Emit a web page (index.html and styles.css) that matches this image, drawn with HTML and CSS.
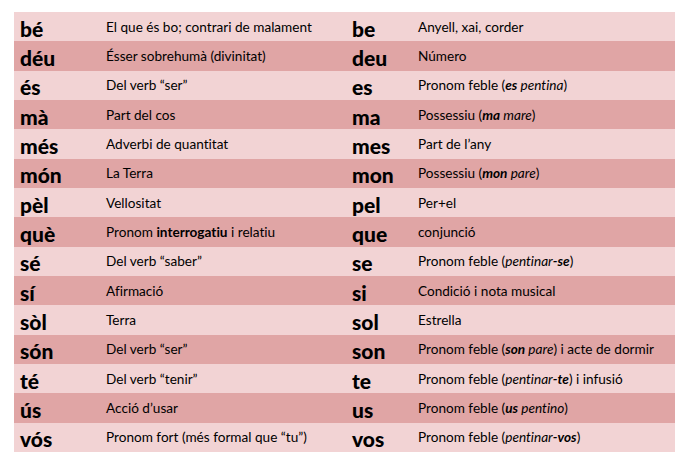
FILE: index.html
```html
<!DOCTYPE html>
<html lang="ca">
<head>
<meta charset="utf-8">
<link rel="stylesheet" href="styles.css">
</head>
<body>
<div class="table">
  <div class="row light"><div class="w">bé</div><div class="d">El que és bo; contrari de malament</div><div class="w">be</div><div class="d">Anyell, xai, corder</div></div>
  <div class="row dark"><div class="w">déu</div><div class="d">Ésser sobrehumà (divinitat)</div><div class="w">deu</div><div class="d">Número</div></div>
  <div class="row light"><div class="w">és</div><div class="d">Del verb “ser”</div><div class="w">es</div><div class="d">Pronom feble (<i><b>es</b> pentina</i>)</div></div>
  <div class="row dark"><div class="w">mà</div><div class="d">Part del cos</div><div class="w">ma</div><div class="d">Possessiu (<i><b>ma</b> mare</i>)</div></div>
  <div class="row light"><div class="w">més</div><div class="d">Adverbi de quantitat</div><div class="w">mes</div><div class="d">Part de l’any</div></div>
  <div class="row dark"><div class="w">món</div><div class="d">La Terra</div><div class="w">mon</div><div class="d">Possessiu (<i><b>mon</b> pare</i>)</div></div>
  <div class="row light"><div class="w">pèl</div><div class="d">Vellositat</div><div class="w">pel</div><div class="d">Per+el</div></div>
  <div class="row dark"><div class="w">què</div><div class="d">Pronom <b>interrogatiu</b> i relatiu</div><div class="w">que</div><div class="d">conjunció</div></div>
  <div class="row light"><div class="w">sé</div><div class="d">Del verb “saber”</div><div class="w">se</div><div class="d">Pronom feble (<i>pentinar<b>-se</b></i>)</div></div>
  <div class="row dark"><div class="w">sí</div><div class="d">Afirmació</div><div class="w">si</div><div class="d">Condició i nota musical</div></div>
  <div class="row light"><div class="w">sòl</div><div class="d">Terra</div><div class="w">sol</div><div class="d">Estrella</div></div>
  <div class="row dark"><div class="w">són</div><div class="d">Del verb “ser”</div><div class="w">son</div><div class="d">Pronom feble (<i><b>son</b> pare</i>) i acte de dormir</div></div>
  <div class="row light"><div class="w">té</div><div class="d">Del verb “tenir”</div><div class="w">te</div><div class="d">Pronom feble (<i>pentinar<b>-te</b></i>) i infusió</div></div>
  <div class="row dark"><div class="w">ús</div><div class="d">Acció d’usar</div><div class="w">us</div><div class="d">Pronom feble (<i><b>us</b> pentino</i>)</div></div>
  <div class="row light"><div class="w">vós</div><div class="d">Pronom fort (més formal que “tu”)</div><div class="w">vos</div><div class="d">Pronom feble (<i>pentinar<b>-vos</b></i>)</div></div>
</div>
</body>
</html>
```
FILE: styles.css
```css
html, body {
  margin: 0;
  padding: 0;
  background: #ffffff;
}
body {
  padding: 12px 0 0 14px;
  font-family: Lato, "Open Sans", sans-serif;
  font-variant-ligatures: none;
  color: #000;
}
.table {
  width: 661px;
  display: flex;
  flex-direction: column;
}
.row {
  display: grid;
  grid-template-columns: 86px 246px 66px 263px;
  height: 29.333px;
  align-items: center;
}
.light { background: #f2d3d4; }
.dark { background: #e0a5a5; }
.w {
  padding-left: 6px;
  font-weight: 900;
  font-size: 21px;
  line-height: 22px;
  padding-top: 4px;
}
.d {
  padding-left: 6px;
  font-size: 13.6px;
  line-height: 16px;
  white-space: nowrap;
}
.d b { font-weight: 700; }
```
